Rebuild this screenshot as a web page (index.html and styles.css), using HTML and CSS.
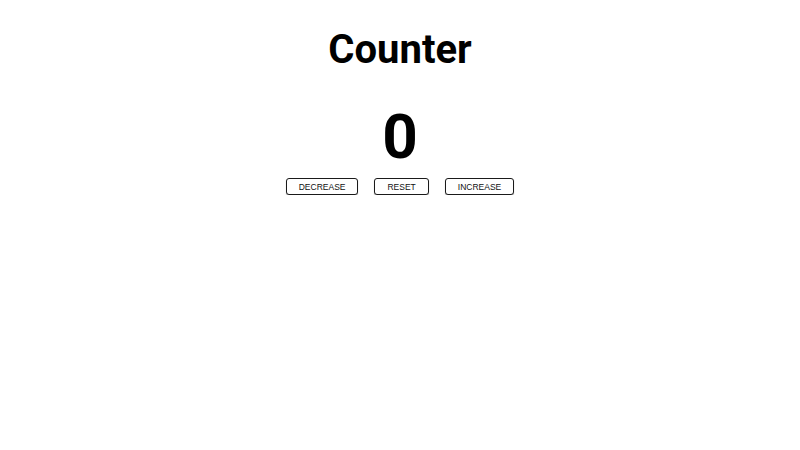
FILE: index.html
```html
<!DOCTYPE html>
<html lang="en">
<head>
    <meta charset="UTF-8">
    <meta name="viewport" content="width=device-width, initial-scale=1.0">
    <title>Counter</title>
    <link rel="stylesheet" href="styles.css">
</head>
<body>
    <main class="counter">
        <h1 class="title">Counter</h1>
        <span class="value" id="value">0</span>
        <div class="buttons">
            <button class="btn" data-step="-1">DECREASE</button>
            <button class="btn" data-step="0">RESET</button>
            <button class="btn" data-step="1">INCREASE</button>
        </div>
    </main>
    <script src="script.js"></script>
</body>
</html>
```

FILE: styles.css
```css
* {
    box-sizing: border-box;
}
body {
    margin: 0;
    font-family: Roboto, "Liberation Sans", Arial, sans-serif;
    background: #fff;
    color: #000;
}
.counter {
    display: flex;
    flex-direction: column;
    align-items: center;
    padding-top: 30px;
}
.title {
    margin: 0;
    font-size: 40px;
    font-weight: 700;
    line-height: 1;
}
.value {
    margin-top: 36px;
    font-size: 62px;
    font-weight: 700;
    line-height: 1;
}
.buttons {
    display: flex;
    gap: 16px;
    margin-top: 10px;
}
.btn {
    height: 17px;
    padding: 0 12px;
    font-family: "Liberation Sans", Arial, sans-serif;
    font-size: 8.5px;
    color: #111;
    background: #fff;
    border: 1.5px solid #1a1a1a;
    border-radius: 3px;
    box-shadow: 0 1px 1px rgba(0,0,0,0.3);
    cursor: pointer;
}
.btn:hover {
    background: #f2f2f2;
}
```

FILE: script.js
```js
let count = 0;
const valueEl = document.getElementById('value');

document.querySelectorAll('.btn').forEach(btn => {
    btn.addEventListener('click', () => {
        const step = Number(btn.dataset.step);
        count = step === 0 ? 0 : count + step;
        valueEl.textContent = count;
        valueEl.style.color = count > 0 ? 'green' : count < 0 ? 'red' : '';
    });
});
```
